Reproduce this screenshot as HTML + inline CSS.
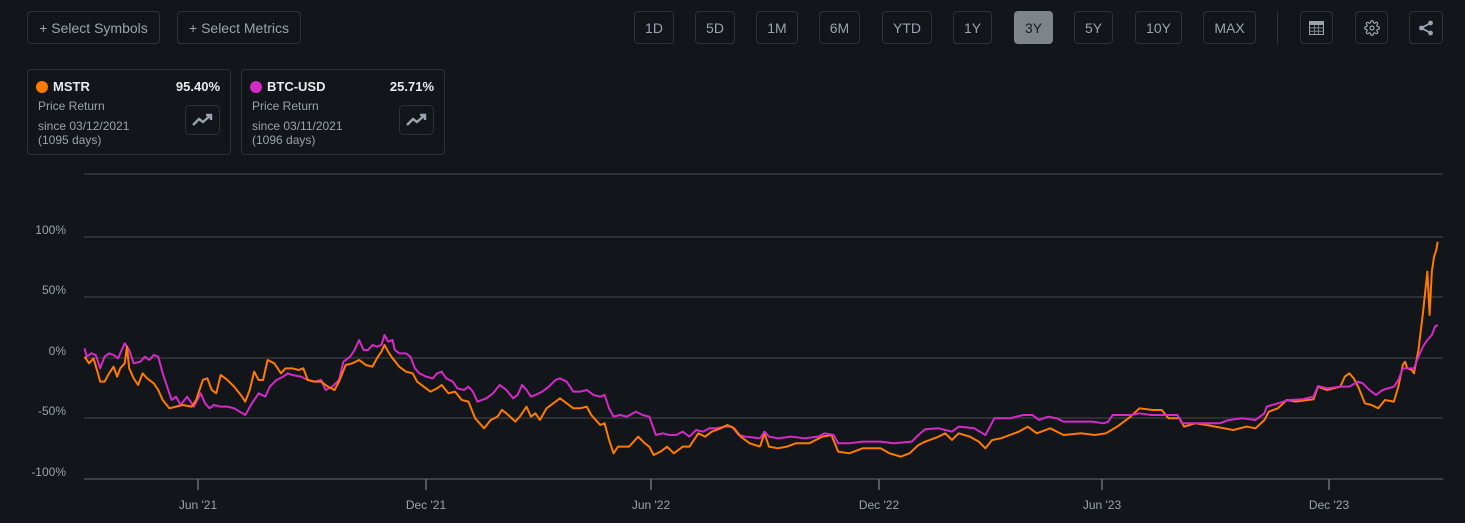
<!DOCTYPE html>
<html><head><meta charset="utf-8"><style>
*{box-sizing:border-box;margin:0;padding:0}
body{width:1465px;height:523px;background:#121519;font-family:"Liberation Sans",sans-serif;position:relative;overflow:hidden;color:#a9b1b8}
.b{position:absolute;top:11px;height:33px;border:1px solid #2d3237;border-radius:4px;font-size:14px;color:#9ba4ac;display:flex;align-items:center;justify-content:center}
.act{background:#7e8589;color:#1a1d20;border-color:#7e8589}
.card{position:absolute;top:69px;height:86px;width:204px;border:1px solid #2d3237;border-radius:4px}
.dot{position:absolute;left:8px;top:11px;width:12px;height:12px;border-radius:50%}
.nm{position:absolute;left:25px;top:9px;font-size:13px;font-weight:bold;color:#e8ebee}
.pc{position:absolute;right:10px;top:9px;font-size:13px;font-weight:bold;color:#e8ebee}
.pr{position:absolute;left:10px;top:29px;font-size:12px;color:#9ba4ac}
.sn{position:absolute;left:10px;top:49px;font-size:12px;color:#9ba4ac;line-height:14px}
.ic{position:absolute;right:10px;top:35px;width:35px;height:30px;border:1px solid #2d3237;border-radius:5px}
.yl{position:absolute;left:0;width:66px;text-align:right;font-size:12px;color:#9ba4ac}
.xl{position:absolute;top:498px;font-size:12px;color:#9ba4ac;transform:translateX(-50%)}
</style></head><body>
<div class="b" style="left:27px;width:133px">+ Select Symbols</div>
<div class="b" style="left:177px;width:124px">+ Select Metrics</div>
<div class="b" style="left:634px;width:40px">1D</div>
<div class="b" style="left:695px;width:40px">5D</div>
<div class="b" style="left:756px;width:42px">1M</div>
<div class="b" style="left:819px;width:41px">6M</div>
<div class="b" style="left:882px;width:50px">YTD</div>
<div class="b" style="left:953px;width:39px">1Y</div>
<div class="b act" style="left:1014px;width:39px">3Y</div>
<div class="b" style="left:1074px;width:39px">5Y</div>
<div class="b" style="left:1135px;width:47px">10Y</div>
<div class="b" style="left:1203px;width:53px">MAX</div>
<div style="position:absolute;left:1277px;top:11px;width:1px;height:34px;background:#2d3237"></div>
<div class="b" style="left:1300px;width:33px"><svg width="15" height="14" viewBox="0 0 15 14"><rect x="0" y="0" width="15" height="14" fill="#9ba4ac"/><g fill="#121519"><rect x="1" y="4" width="4" height="2.5"/><rect x="5.7" y="4" width="3.6" height="2.5"/><rect x="10" y="4" width="4" height="2.5"/><rect x="1" y="7.3" width="4" height="2.5"/><rect x="5.7" y="7.3" width="3.6" height="2.5"/><rect x="10" y="7.3" width="4" height="2.5"/><rect x="1" y="10.6" width="4" height="2.4"/><rect x="5.7" y="10.6" width="3.6" height="2.4"/><rect x="10" y="10.6" width="4" height="2.4"/></g></svg></div>
<div class="b" style="left:1355px;width:33px"><svg width="16" height="16" viewBox="0 0 24 24" fill="none" stroke="#9ba4ac" stroke-width="1.8"><circle cx="12" cy="12" r="3"/><path d="M19.4 15a1.7 1.7 0 0 0 .3 1.8l.1.1a2 2 0 1 1-2.8 2.8l-.1-.1a1.7 1.7 0 0 0-1.8-.3 1.7 1.7 0 0 0-1 1.5V21a2 2 0 1 1-4 0v-.1a1.7 1.7 0 0 0-1.1-1.5 1.7 1.7 0 0 0-1.8.3l-.1.1a2 2 0 1 1-2.8-2.8l.1-.1a1.7 1.7 0 0 0 .3-1.8 1.7 1.7 0 0 0-1.5-1H3a2 2 0 1 1 0-4h.1a1.7 1.7 0 0 0 1.5-1.1 1.7 1.7 0 0 0-.3-1.8l-.1-.1a2 2 0 1 1 2.8-2.8l.1.1a1.7 1.7 0 0 0 1.8.3H9a1.7 1.7 0 0 0 1-1.5V3a2 2 0 1 1 4 0v.1a1.7 1.7 0 0 0 1 1.5 1.7 1.7 0 0 0 1.8-.3l.1-.1a2 2 0 1 1 2.8 2.8l-.1.1a1.7 1.7 0 0 0-.3 1.8V9a1.7 1.7 0 0 0 1.5 1H21a2 2 0 1 1 0 4h-.1a1.7 1.7 0 0 0-1.5 1z"/></svg></div>
<div class="b" style="left:1409px;width:34px"><svg width="16" height="16" viewBox="0 0 16 16"><path d="M12.5 3 L3.5 8 L12.5 13" stroke="#9ba4ac" stroke-width="1.8" fill="none"/><circle cx="12.5" cy="3" r="2.4" fill="#9ba4ac"/><circle cx="3.5" cy="8" r="2.4" fill="#9ba4ac"/><circle cx="12.5" cy="13" r="2.4" fill="#9ba4ac"/></svg></div>

<div class="card" style="left:27px"><div class="dot" style="background:#ff7a00"></div><div class="nm">MSTR</div><div class="pc">95.40%</div><div class="pr">Price Return</div><div class="sn">since 03/12/2021<br>(1095 days)</div><div class="ic"><svg width="33" height="28" viewBox="0 0 33 28"><path d="M7 19 L13 13 L17 16 L25 9 M20 9 H25 V14" stroke="#9ba4ac" stroke-width="2.4" fill="none"/></svg></div></div>
<div class="card" style="left:241px"><div class="dot" style="background:#d42ac7"></div><div class="nm">BTC-USD</div><div class="pc">25.71%</div><div class="pr">Price Return</div><div class="sn">since 03/11/2021<br>(1096 days)</div><div class="ic"><svg width="33" height="28" viewBox="0 0 33 28"><path d="M7 19 L13 13 L17 16 L25 9 M20 9 H25 V14" stroke="#9ba4ac" stroke-width="2.4" fill="none"/></svg></div></div>

<div class="yl" style="top:223px">100%</div>
<div class="yl" style="top:283px">50%</div>
<div class="yl" style="top:344px">0%</div>
<div class="yl" style="top:404px">-50%</div>
<div class="yl" style="top:465px">-100%</div>
<div class="xl" style="left:198px">Jun '21</div>
<div class="xl" style="left:426px">Dec '21</div>
<div class="xl" style="left:651px">Jun '22</div>
<div class="xl" style="left:879px">Dec '22</div>
<div class="xl" style="left:1102px">Jun '23</div>
<div class="xl" style="left:1329px">Dec '23</div>

<svg width="1465" height="523" style="position:absolute;left:0;top:0">
<g stroke="#2c3034" stroke-width="2">
<line x1="84" y1="174" x2="1443" y2="174"/><line x1="84" y1="237" x2="1443" y2="237"/><line x1="84" y1="297" x2="1443" y2="297"/><line x1="84" y1="358" x2="1443" y2="358"/><line x1="84" y1="418" x2="1443" y2="418"/><line x1="84" y1="479" x2="1443" y2="479" stroke="#3a3f44"/>
</g>
<g stroke="#6b7278" stroke-width="1.5"><line x1="198" y1="479" x2="198" y2="490"/><line x1="426" y1="479" x2="426" y2="490"/><line x1="651" y1="479" x2="651" y2="490"/><line x1="879" y1="479" x2="879" y2="490"/><line x1="1102" y1="479" x2="1102" y2="490"/><line x1="1329" y1="479" x2="1329" y2="490"/></g>
<g transform="translate(60,160) scale(0.4464,0.3333)" fill="none" stroke-width="2" stroke-linejoin="round">
<polyline vector-effect="non-scaling-stroke" stroke="#d42ac7" points="55,565 60,590 70,580 80,585 90,625 100,590 110,580 120,585 130,595 145,550 155,570 165,610 180,605 190,590 200,600 210,585 220,590 230,640 240,680 250,720 260,710 270,735 285,710 300,740 315,700 325,730 335,745 345,735 360,740 375,740 390,745 415,765 430,730 445,700 460,710 470,680 485,660 500,650 510,640 520,645 540,650 555,660 570,665 585,660 595,690 610,680 625,660 635,605 650,590 660,570 670,540 680,570 690,570 700,555 710,560 720,555 727,525 735,545 745,540 750,570 760,580 775,580 785,590 795,625 805,640 820,650 835,655 845,640 855,635 865,655 880,665 890,685 905,690 915,680 925,695 935,725 955,715 970,700 985,675 1000,690 1015,715 1025,705 1035,675 1045,690 1055,710 1065,705 1080,695 1095,680 1110,660 1120,655 1135,665 1150,695 1165,695 1180,690 1195,705 1210,710 1220,705 1230,745 1240,770 1255,765 1270,770 1290,755 1305,765 1320,770 1335,825 1350,820 1365,825 1380,825 1395,815 1410,830 1425,810 1440,815 1455,805 1470,805 1490,800 1505,800 1520,825 1535,830 1568,835"/>
<polyline vector-effect="non-scaling-stroke" stroke="#ff7a00" points="55,590 65,610 75,595 85,640 90,665 100,665 110,640 120,620 128,650 135,625 145,610 150,560 155,625 165,655 175,675 185,640 195,655 210,670 220,690 230,720 245,745 260,740 275,735 295,740 305,720 320,660 330,655 340,690 350,700 360,645 375,660 390,680 405,705 415,725 425,690 435,635 445,660 455,660 465,600 480,610 495,640 505,625 520,625 535,630 545,625 555,660 570,665 585,665 600,680 615,690 625,665 640,615 655,610 670,600 685,615 700,620 710,595 720,575 727,555 735,575 745,595 760,620 775,635 790,640 800,665 815,680 830,695 845,685 855,675 870,700 885,695 900,720 915,725 930,775 950,805 965,780 980,770 990,750 1000,760 1020,785 1030,770 1045,740 1055,770 1065,760 1075,780 1090,745 1105,730 1120,715 1135,730 1150,745 1165,745 1180,740 1190,765 1200,780 1210,795 1220,790 1230,840 1240,880 1250,860 1260,860 1275,860 1295,830 1310,850 1320,860 1330,885 1345,875 1360,860 1375,880 1395,860 1410,860 1430,820 1445,830 1460,815 1480,805 1495,795 1510,805 1525,830 1545,850 1568,860"/>
</g>
<g transform="translate(760,160) scale(0.4464,0.3333)" fill="none" stroke-width="2" stroke-linejoin="round">
<polyline vector-effect="non-scaling-stroke" stroke="#ff7a00" points="0,860 10,820 20,860 40,865 60,860 80,850 110,850 140,830 160,825 175,875 200,880 230,865 270,865 290,880 315,890 335,880 355,855 370,845 400,830 415,820 430,840 445,820 470,830 490,845 505,865 520,840 540,835 560,825 580,815 600,800 620,820 650,805 680,825 720,820 750,825 775,820 800,800 830,770 850,745 880,750 900,750 915,775 940,775 950,800 975,790 1000,795 1040,805 1060,810 1090,800 1110,805 1130,780 1140,755 1160,745 1180,720 1200,725 1240,718 1250,680 1270,690 1300,680 1310,650 1320,640 1330,655 1340,680 1355,730 1370,735 1385,745 1400,720 1420,725 1430,680 1440,615 1445,605 1450,625 1460,630 1465,640 1475,570 1485,460 1495,335 1500,465 1505,335 1510,290 1515,270 1518,245"/>
<polyline vector-effect="non-scaling-stroke" stroke="#d42ac7" points="0,835 10,815 20,830 40,835 70,830 100,835 130,830 145,820 165,825 175,850 200,850 230,845 270,845 300,850 340,845 355,825 370,808 400,805 430,815 445,800 480,805 505,825 515,800 525,775 560,775 590,765 610,765 625,780 645,770 665,775 680,785 720,785 745,785 770,790 780,785 790,765 830,765 850,760 875,765 935,765 945,790 975,790 1000,790 1030,790 1050,780 1080,775 1110,780 1130,760 1135,740 1160,730 1185,720 1215,718 1240,710 1250,678 1270,685 1300,680 1320,680 1340,665 1350,670 1365,690 1380,705 1395,690 1420,680 1430,660 1440,625 1465,625 1475,590 1485,560 1495,540 1505,525 1512,500 1518,495"/>
</g>
</svg>
</body></html>
